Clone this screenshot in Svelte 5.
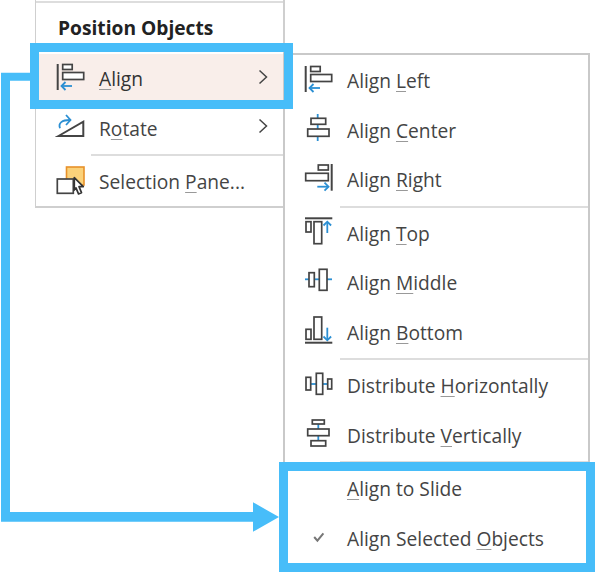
<script>
	const icons = {
		alignLeft: {
			blue: ['M6.5 23H17', 'M10.5 19l-4 4 4 4'],
			rects: [[7.7, 1.5, 9.5, 5], [7.7, 9.5, 21, 7]],
			dark: ['M2.7 1v26']
		},
		alignCenter: {
			blue: ['M14.7 0v27'],
			rects: [[8, 4.3, 14.7, 6], [4.7, 15, 21.3, 7.3]],
			dark: []
		},
		alignRight: {
			blue: ['M14.3 22.7h11', 'M21.5 18.7l4 4-4 4'],
			rects: [[15.3, 1, 10, 5], [2.7, 9.3, 22.6, 7.4]],
			dark: ['M28.7 0v26.7']
		},
		alignTop: {
			blue: ['M24.3 16V5', 'M20.5 8.5l3.8-3.8 3.8 3.8'],
			rects: [[3, 4.7, 5, 10.3], [11, 4.7, 7.7, 22]],
			dark: ['M2 1.3h27.3']
		},
		alignMiddle: {
			blue: ['M2 12.3h27'],
			rects: [[6, 5.7, 5.3, 14], [16.3, 2.3, 7.7, 21]],
			dark: []
		},
		alignBottom: {
			blue: ['M24.3 11.7v12', 'M20.5 20.5l3.8 3.8 3.8-3.8'],
			rects: [[3, 13.3, 5, 10], [11, 1, 7.7, 22.3]],
			dark: ['M2 26.7h27.3']
		},
		distH: {
			blue: ['M7.7 14h17'],
			rects: [[3, 7.3, 4.7, 12.7], [13.3, 3.3, 6.4, 21], [24.7, 9, 4, 10]],
			dark: []
		},
		distV: {
			blue: ['M15.3 5v16.7'],
			rects: [[9.3, 1, 12, 4], [4.7, 10, 21.3, 6.7], [8, 21.7, 14.7, 5.3]],
			dark: []
		}
	};

	const submenu = [
		[
			{ icon: 'alignLeft', before: 'Align ', key: 'L', after: 'eft' },
			{ icon: 'alignCenter', before: 'Align ', key: 'C', after: 'enter' },
			{ icon: 'alignRight', before: 'Align ', key: 'R', after: 'ight' }
		],
		[
			{ icon: 'alignTop', before: 'Align ', key: 'T', after: 'op' },
			{ icon: 'alignMiddle', before: 'Align ', key: 'M', after: 'iddle' },
			{ icon: 'alignBottom', before: 'Align ', key: 'B', after: 'ottom' }
		],
		[
			{ icon: 'distH', before: 'Distribute ', key: 'H', after: 'orizontally' },
			{ icon: 'distV', before: 'Distribute ', key: 'V', after: 'ertically' }
		],
		[
			{ before: '', key: 'A', after: 'lign to Slide' },
			{ check: true, before: 'Align Selected ', key: 'O', after: 'bjects' }
		]
	];
</script>

{#snippet shapes(name)}
	{@const icon = icons[name]}
	<svg class="icon" viewBox="0 0 32 32">
		{#each icon.blue as d}
			<path class="blue" {d} />
		{/each}
		{#each icon.rects as [x, y, width, height]}
			<rect class="box" {x} {y} {width} {height} />
		{/each}
		{#each icon.dark as d}
			<path class="dark" {d} />
		{/each}
	</svg>
{/snippet}

{#snippet chevron()}
	<svg class="chevron" viewBox="0 0 10 16">
		<path d="M1.5 1.5L8.5 8l-7 6.5" />
	</svg>
{/snippet}

<div class="page">
	<div class="menus">
		<div class="panel first">
			<div class="sep full"></div>
			<div class="heading">Position Objects</div>
			<div class="row active">
				{@render shapes('alignLeft')}
				<span class="label"><u>A</u>lign</span>
				{@render chevron()}
			</div>
			<div class="row">
				<svg class="icon" viewBox="0 0 32 32">
					<path class="blue" d="M5 16.3C3 11 7 8 15 8" />
					<path class="blue" d="M11 3l4.5 5-4.5 5" />
					<path class="dark" d="M3.5 24L28.3 9.7V24Z" />
				</svg>
				<span class="label">R<u>o</u>tate</span>
				{@render chevron()}
			</div>
			<div class="sep"></div>
			<div class="row">
				<svg class="icon" viewBox="0 0 32 32">
					<rect x="11.5" y="1" width="17.5" height="18" fill="#fbd27a" stroke="#e8912a" stroke-width="1.6" />
					<rect class="box" x="2.3" y="13" width="16" height="14.3" />
					<path d="M19.3 11.7l9 9H24l2.5 6-3 1.2-2.5-6-1.7 2.2Z" fill="#fff" stroke="#333" stroke-width="1.7" stroke-linejoin="round" />
				</svg>
				<span class="label">Selection <u>P</u>ane...</span>
			</div>
		</div>

		<div class="panel second">
			{#each submenu as group, i}
				{#if i > 0}
					<div class="sep"></div>
				{/if}
				{#each group as item}
					<div class="row">
						{#if item.icon}
							{@render shapes(item.icon)}
						{:else if item.check}
							<svg class="icon" viewBox="0 0 32 32">
								<path class="tick" d="M11.2 15l3.2 3.6 6-7.3" />
							</svg>
						{:else}
							<span class="icon"></span>
						{/if}
						<span class="label">{item.before}<u>{item.key}</u>{item.after}</span>
					</div>
				{/each}
			{/each}
		</div>
	</div>

	<div class="frame upper"></div>
	<div class="frame lower"></div>
	<svg class="connector" viewBox="0 0 600 573">
		<path d="M30 72.7H1V521.7H253V531.7L279 517L253 502.3V512H10V80.7H30Z" />
	</svg>
</div>

<style>
	:global(body) {
		background: #fff;
	}

	.page {
		position: relative;
		width: 600px;
		height: 573px;
		overflow: hidden;
		font-family: 'Open Sans', 'Noto Sans', sans-serif;
		color: #444;
	}

	.menus {
		display: flex;
		align-items: flex-start;
		padding-left: 35px;
	}

	.panel {
		box-sizing: border-box;
		background: #fff;
		border: 1px solid #c9c9c9;
		border-width: 1px 2px 2px 1px;
	}

	.first {
		width: 250px;
		height: 208px;
		border-top: 0;
		border-color: #cfcfcf;
	}

	.second {
		width: 307px;
		margin-left: -2px;
		margin-top: 53px;
		padding: 1px 0;
		border-width: 2px;
	}

	.heading {
		box-sizing: border-box;
		height: 51px;
		display: flex;
		align-items: center;
		padding: 0 0 3px 22px;
		font-size: 19.2px;
		font-weight: 700;
		color: #222;
	}

	.row {
		display: flex;
		align-items: center;
		gap: 12px;
		height: 49.5px;
		padding-left: 19px;
		padding-right: 15px;
	}

	.second .row {
		padding-left: 18px;
	}

	.active {
		background: #f9eeea;
		color: #333;
	}

	.icon {
		width: 32px;
		height: 32px;
		flex: none;
	}

	.label {
		flex: 1;
		font-size: 19.2px;
		white-space: nowrap;
	}

	u {
		text-decoration-color: #999;
		text-decoration-thickness: 1px;
		text-underline-offset: 3px;
	}

	.chevron {
		width: 10px;
		height: 16px;
		margin-top: -4px;
		fill: none;
		stroke: #444;
		stroke-width: 1.5;
	}

	.sep {
		height: 2px;
		margin: 1px 0 1px 55px;
		background: #ddd;
	}

	.sep.full {
		margin: 1px 0 0 0;
	}

	.box {
		fill: #fff;
		stroke: #444;
		stroke-width: 1.7;
	}

	.blue {
		fill: none;
		stroke: #2b8fd3;
		stroke-width: 1.8;
	}

	.dark {
		fill: none;
		stroke: #444;
		stroke-width: 2;
	}

	.tick {
		fill: none;
		stroke: #777;
		stroke-width: 2;
	}

	.frame {
		position: absolute;
		box-sizing: border-box;
		border: 9px solid #47bdf9;
		pointer-events: none;
	}

	.upper {
		left: 30px;
		top: 43px;
		width: 263px;
		height: 66px;
	}

	.lower {
		left: 279px;
		top: 462px;
		width: 316px;
		height: 110px;
	}

	.connector {
		position: absolute;
		inset: 0;
		width: 600px;
		height: 573px;
		fill: #47bdf9;
		pointer-events: none;
	}
</style>
